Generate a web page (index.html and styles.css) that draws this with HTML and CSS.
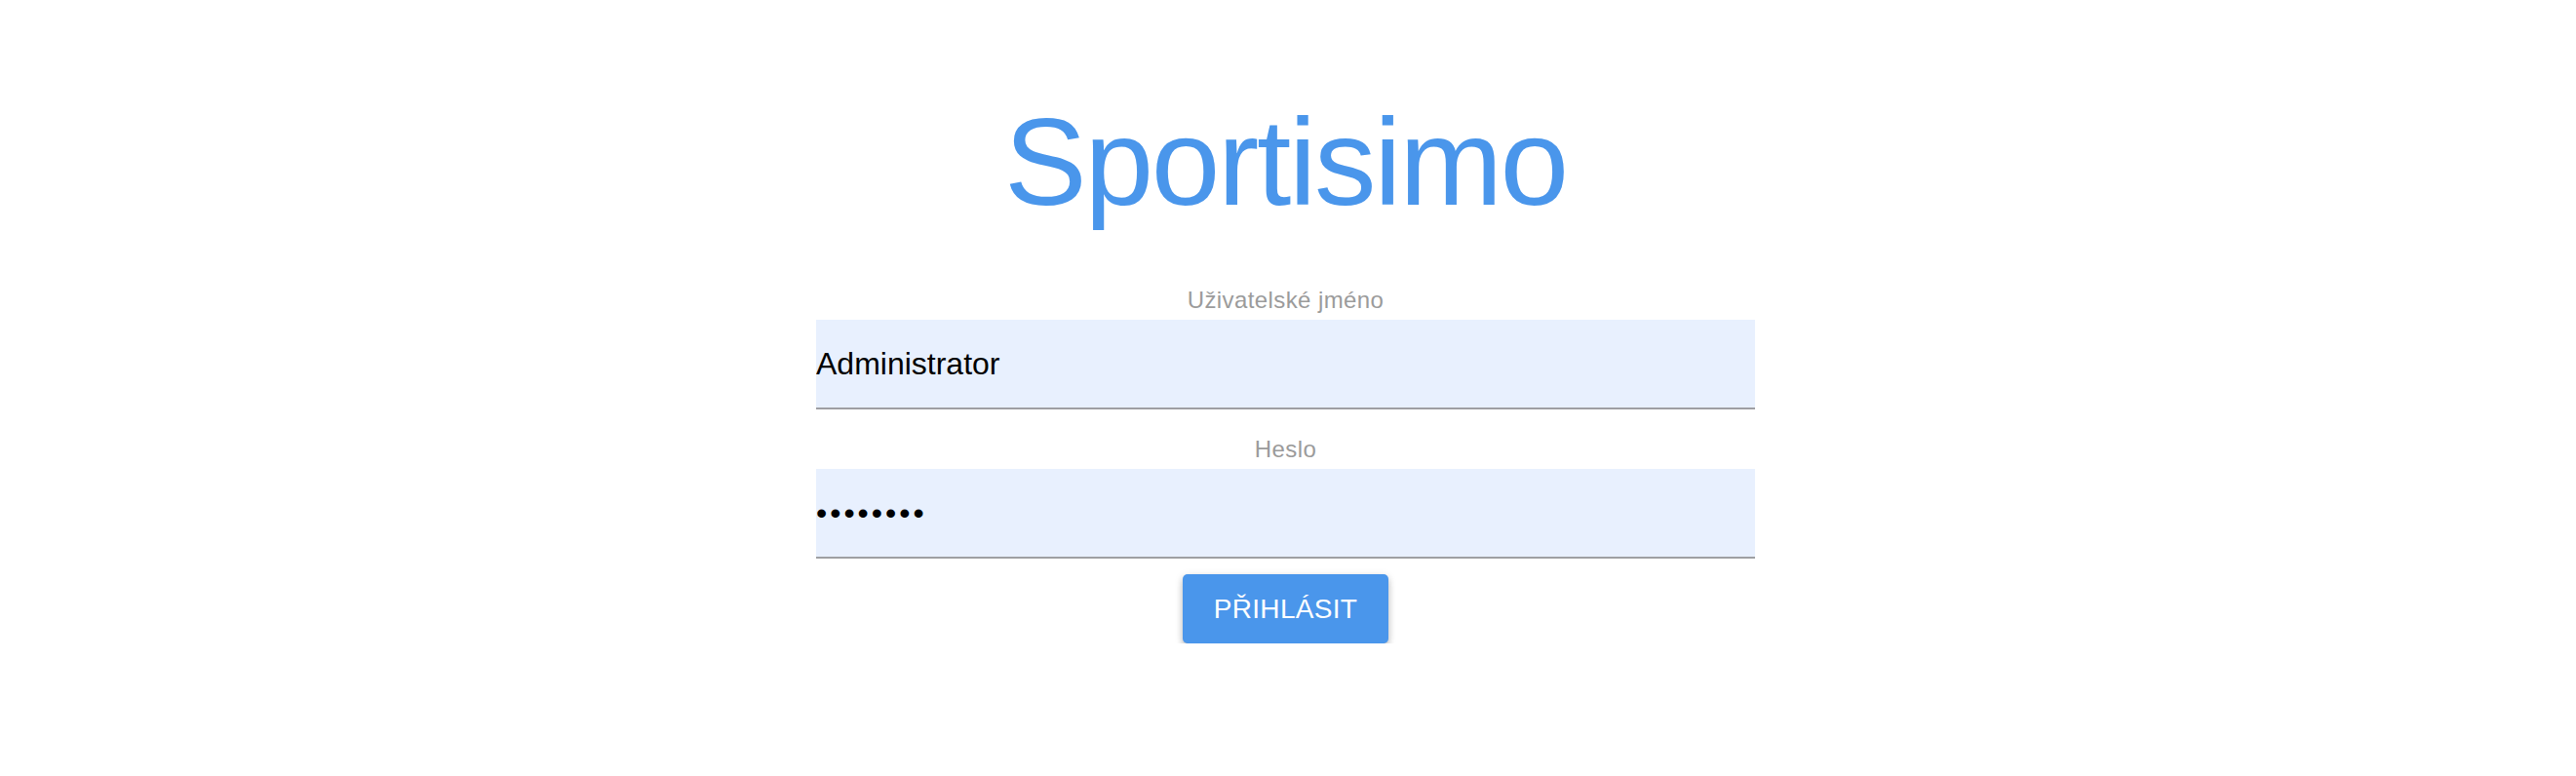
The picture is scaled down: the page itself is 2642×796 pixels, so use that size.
FILE: index.html
```html
<!DOCTYPE html>
<html lang="cs">
<head>
<meta charset="utf-8">
<title>Sportisimo</title>
<link rel="stylesheet" href="styles.css">
</head>
<body>
<main class="page">
  <h1 class="title">Sportisimo</h1>
  <form class="login">
    <div class="field">
      <label class="label" for="user">Uživatelské jméno</label>
      <input class="input" id="user" type="text" value="Administrator">
    </div>
    <div class="field">
      <label class="label" for="pass">Heslo</label>
      <input class="input input-pass" id="pass" type="password" value="12345678">
    </div>
    <button class="btn" type="button">PŘIHLÁSIT</button>
  </form>
</main>
</body>
</html>
```

FILE: styles.css
```css
html, body {
  margin: 0;
  padding: 0;
  background: #ffffff;
}

body {
  font-family: "Liberation Sans", Arial, sans-serif;
}

.page {
  display: flex;
  flex-direction: column;
  align-items: center;
  padding-top: 90px;
  padding-right: 5px;
}

.title {
  margin: 0;
  font-size: 127px;
  line-height: 152px;
  font-weight: 400;
  color: #4a96eb;
  letter-spacing: -2.3px;
}

.login {
  display: flex;
  flex-direction: column;
  align-items: center;
  margin-top: 52px;
}

.field {
  display: flex;
  flex-direction: column;
  align-items: center;
  margin-bottom: 27px;
}

.field + .field {
  margin-bottom: 16px;
}

.label {
  font-size: 24px;
  line-height: 28px;
  color: #9b9b9b;
  margin-bottom: 6px;
  letter-spacing: 0.4px;
}

.input {
  box-sizing: border-box;
  width: 963px;
  height: 92px;
  margin: 0;
  padding: 0;
  border: 0;
  border-bottom: 2px solid #9e9fa3;
  background: #e8f0fe;
  font-family: "Liberation Sans", Arial, sans-serif;
  font-size: 32px;
  color: #000000;
  outline: none;
}

.input-pass {
  letter-spacing: 3px;
}

.btn {
  box-sizing: border-box;
  width: 211px;
  height: 71px;
  padding: 0;
  border: 0;
  border-radius: 5px;
  background: #4a96eb;
  color: #ffffff;
  font-family: "Liberation Sans", Arial, sans-serif;
  font-size: 28px;
  letter-spacing: 0.3px;
  box-shadow: 0 6px 2px -4px rgba(0,0,0,0.2), 0 4px 6px 0 rgba(0,0,0,0.2), 0 2px 10px 0 rgba(0,0,0,0.12);
  cursor: pointer;
}
```
